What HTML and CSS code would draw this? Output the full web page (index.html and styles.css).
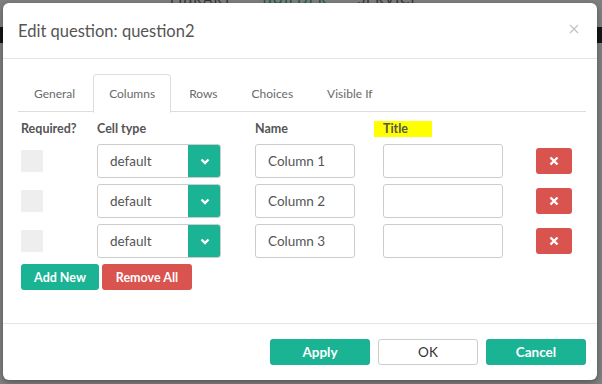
FILE: index.html
```html
<!DOCTYPE html>
<html>
<head>
<meta charset="utf-8">
<link rel="stylesheet" href="styles.css">
</head>
<body>
<div class="page">
  <nav class="topnav">
    <span>LIBRARY</span><span class="active">BUILDER</span><span>SERVICE</span>
  </nav>
  <div class="band"></div>
</div>
<div class="modal">
  <div class="modal-header">
    <h4 class="modal-title">Edit question: question2</h4>
    <span class="close"><svg width="10" height="10" viewBox="0 0 10 10"><path d="M1 1L9 9M9 1L1 9" stroke="#c4c4c4" stroke-width="1.3" fill="none"/></svg></span>
  </div>
  <div class="modal-body">
    <ul class="tabs">
      <li>General</li>
      <li class="active">Columns</li>
      <li>Rows</li>
      <li>Choices</li>
      <li>Visible If</li>
    </ul>
    <div class="grid">
      <div class="hd">Required?</div>
      <div class="hd">Cell type</div>
      <div class="hd">Name</div>
      <div class="hd"><span class="hl">Title</span></div>
      <div class="hd"></div>

      <div class="cell"><span class="chk"></span></div>
      <div class="cell"><div class="select"><span class="val">default</span><span class="arrow"><svg width="10" height="7" viewBox="0 0 10 7"><path d="M1.5 1.5L5 5L8.5 1.5" stroke="#fff" stroke-width="2.4" fill="none"/></svg></span></div></div>
      <div class="cell"><div class="input name">Column 1</div></div>
      <div class="cell"><div class="input title"></div></div>
      <div class="cell"><span class="del"><svg width="10" height="10" viewBox="0 0 10 10"><path d="M1.5 1.5L8.5 8.5M8.5 1.5L1.5 8.5" stroke="#fff" stroke-width="2.4" fill="none"/></svg></span></div>

      <div class="cell"><span class="chk"></span></div>
      <div class="cell"><div class="select"><span class="val">default</span><span class="arrow"><svg width="10" height="7" viewBox="0 0 10 7"><path d="M1.5 1.5L5 5L8.5 1.5" stroke="#fff" stroke-width="2.4" fill="none"/></svg></span></div></div>
      <div class="cell"><div class="input name">Column 2</div></div>
      <div class="cell"><div class="input title"></div></div>
      <div class="cell"><span class="del"><svg width="10" height="10" viewBox="0 0 10 10"><path d="M1.5 1.5L8.5 8.5M8.5 1.5L1.5 8.5" stroke="#fff" stroke-width="2.4" fill="none"/></svg></span></div>

      <div class="cell"><span class="chk"></span></div>
      <div class="cell"><div class="select"><span class="val">default</span><span class="arrow"><svg width="10" height="7" viewBox="0 0 10 7"><path d="M1.5 1.5L5 5L8.5 1.5" stroke="#fff" stroke-width="2.4" fill="none"/></svg></span></div></div>
      <div class="cell"><div class="input name">Column 3</div></div>
      <div class="cell"><div class="input title"></div></div>
      <div class="cell"><span class="del"><svg width="10" height="10" viewBox="0 0 10 10"><path d="M1.5 1.5L8.5 8.5M8.5 1.5L1.5 8.5" stroke="#fff" stroke-width="2.4" fill="none"/></svg></span></div>
    </div>
    <div class="actions">
      <button class="btn green add">Add New</button>
      <button class="btn red remove">Remove All</button>
    </div>
  </div>
  <div class="modal-footer">
    <button class="btn green wide">Apply</button>
    <button class="btn plain wide">OK</button>
    <button class="btn green wide">Cancel</button>
  </div>
</div>
</body>
</html>
```

FILE: styles.css
```css
* { box-sizing: border-box; }
html, body { margin: 0; padding: 0; }
body {
  width: 602px;
  height: 384px;
  overflow: hidden;
  background: #7f7f7f;
  font-family: Lato, "Open Sans", sans-serif;
  position: relative;
}
.page { height: 384px; }
.topnav {
  height: 4px;
  display: flex;
  gap: 30px;
  padding-left: 170px;
  overflow: hidden;
  font-size: 14px;
  line-height: 4px;
  color: #333;
}
.topnav span { position: relative; top: -3px; letter-spacing: 1px; }
.topnav .active { color: #0d5a48; }
.band { margin-top: 23px; height: 16px; background: #151515; }

.modal {
  position: absolute;
  left: 3px;
  top: 3px;
  width: 594px;
  height: 377px;
  background: #fff;
  border-radius: 6px;
  box-shadow: 0 2px 6px rgba(0,0,0,.35);
  display: flex;
  flex-direction: column;
}
.modal-header {
  height: 56px;
  border-bottom: 1px solid #e5e5e5;
  display: flex;
  align-items: center;
  justify-content: space-between;
  padding: 0 18px 0 15px;
}
.modal-title {
  margin: 0;
  font-size: 16.5px;
  font-weight: 400;
  color: #555;
}
.close { display: flex; margin-top: -4px; }

.modal-body {
  flex: 1;
  padding: 15px 11px 0 15px;
}
.tabs {
  list-style: none;
  margin: 0;
  padding: 0;
  display: flex;
  border-bottom: 1px solid #ddd;
  height: 38px;
}
.tabs li {
  padding: 0 15px;
  margin-right: 2px;
  border: 1px solid transparent;
  border-radius: 4px 4px 0 0;
  font-size: 12px;
  color: #6a6a6a;
  display: flex;
  align-items: center;
  height: 38px;
}
.tabs li.active {
  border-color: #ddd;
  border-bottom-color: #fff;
  background: #fff;
  height: 39px;
}

.grid {
  display: grid;
  grid-template-columns: 76px 158px 128px 153px 36px;
  grid-template-rows: 18px 34px 34px 34px;
  row-gap: 6px;
  margin: 8px 0 0 3px;
}
.hd {
  font-size: 12.5px;
  font-weight: 700;
  color: #555;
  line-height: 18px;
}
.hl {
  background: #ffff00;
  display: inline-block;
  margin-left: -9px;
  padding: 0 24px 0 9px;
  line-height: 16px;
}
.cell { display: flex; align-items: center; }
.chk { width: 22px; height: 22px; background: #eeeeee; border-radius: 1px; }
.select {
  width: 124px;
  height: 34px;
  display: flex;
  border: 1px solid #ccc;
  border-radius: 3px;
  overflow: hidden;
}
.val {
  flex: 1;
  font-size: 13.5px;
  color: #555;
  padding-left: 12px;
  display: flex;
  align-items: center;
}
.arrow {
  width: 33px;
  margin: -1px -1px -1px 0;
  background: #1ab394;
  display: flex;
  align-items: center;
  justify-content: center;
}
.input {
  height: 34px;
  border: 1px solid #ccc;
  border-radius: 3px;
  font-size: 13.5px;
  color: #555;
  padding-left: 12px;
  display: flex;
  align-items: center;
}
.input.name { width: 100px; }
.input.title { width: 120px; }
.del {
  width: 36px;
  height: 26px;
  background: #d9534f;
  border-radius: 3px;
  display: flex;
  align-items: center;
  justify-content: center;
}

.actions {
  display: flex;
  gap: 3px;
  margin: 6px 0 0 3px;
}
.btn {
  height: 26px;
  border: 0;
  border-radius: 3px;
  font-family: inherit;
  font-size: 12.5px;
  font-weight: 700;
  color: #fff;
  padding: 0;
  display: flex;
  align-items: center;
  justify-content: center;
}
.green { background: #1ab394; }
.red { background: #d9534f; }
.add { width: 78px; }
.remove { width: 90px; }

.modal-footer {
  height: 57px;
  border-top: 1px solid #e5e5e5;
  display: flex;
  justify-content: flex-end;
  align-items: center;
  gap: 8px;
  padding: 0 11px 1px 0;
}
.wide { width: 100px; font-size: 13.5px; }
.plain {
  background: #fff;
  border: 1px solid #ccc;
  color: #333;
  font-weight: 400;
}
```
